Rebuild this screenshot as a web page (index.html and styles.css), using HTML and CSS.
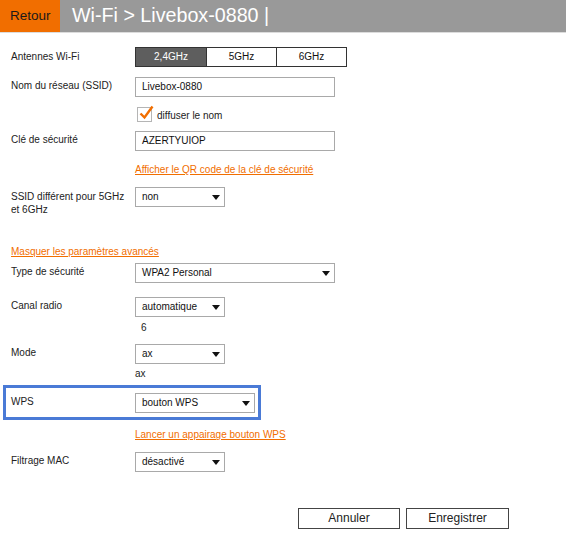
FILE: index.html
```
<!DOCTYPE html>
<html lang="fr">
<head>
<meta charset="utf-8">
<title>Wi-Fi</title>
<link rel="stylesheet" href="styles.css">
</head>
<body>
<header class="topbar">
  <a class="back">Retour</a>
  <h1 class="title">Wi-Fi &gt; Livebox-0880 |</h1>
</header>
<main class="form">
  <div class="row r-antennes">
    <span class="label lbl-tabs">Antennes Wi-Fi</span>
    <div class="tabs">
      <span class="tab active">2,4GHz</span>
      <span class="tab">5GHz</span>
      <span class="tab">6GHz</span>
    </div>
  </div>

  <div class="row r-ssid">
    <span class="label">Nom du réseau (SSID)</span>
    <div class="field wide">Livebox-0880</div>
  </div>

  <div class="sub r-check">
    <span class="checkbox">
      <svg class="check" viewBox="0 0 16 16" width="16" height="16"><path d="M2.5 8.5 L6.5 12.5 L14.5 1.5" fill="none" stroke="#f16e00" stroke-width="2.4"/></svg>
    </span>
    <span class="check-label">diffuser le nom</span>
  </div>

  <div class="row r-key">
    <span class="label">Clé de sécurité</span>
    <div class="field wide">AZERTYUIOP</div>
  </div>

  <div class="sub r-qr"><a class="link">Afficher le QR code de la clé de sécurité</a></div>

  <div class="row r-diff">
    <span class="label two">SSID différent pour 5GHz<br>et 6GHz</span>
    <div class="select short">non<span class="arrow"></span></div>
  </div>

  <div class="r-adv"><a class="link">Masquer les paramètres avancés</a></div>

  <div class="row r-type">
    <span class="label">Type de sécurité</span>
    <div class="select wide">WPA2 Personal<span class="arrow"></span></div>
  </div>

  <div class="row r-canal">
    <span class="label">Canal radio</span>
    <div class="select short">automatique<span class="arrow"></span></div>
  </div>
  <div class="sub value r-six">6</div>

  <div class="row r-mode">
    <span class="label">Mode</span>
    <div class="select short">ax<span class="arrow"></span></div>
  </div>
  <div class="sub value r-ax">ax</div>

  <div class="row r-wps">
    <span class="label">WPS</span>
    <div class="select mid">bouton WPS<span class="arrow"></span></div>
  </div>

  <div class="sub r-pair"><a class="link">Lancer un appairage bouton WPS</a></div>

  <div class="row r-mac">
    <span class="label">Filtrage MAC</span>
    <div class="select short">désactivé<span class="arrow"></span></div>
  </div>

  <div class="actions">
    <button class="btn btn-cancel">Annuler</button>
    <button class="btn btn-save">Enregistrer</button>
  </div>
</main>
</body>
</html>
```

FILE: styles.css
```
* { box-sizing: border-box; }
html, body { margin: 0; padding: 0; background: #fff; }
body {
  font-family: "Liberation Sans", Arial, sans-serif;
  font-size: 10px;
  color: #222;
  width: 566px;
}

.topbar {
  display: flex;
  align-items: stretch;
  height: 33px;
  background: #999999;
  border-bottom: 1px solid #dcdcdc;
}
.back {
  width: 60px;
  background: #f16e00;
  color: #1a1a1a;
  font-size: 13.5px;
  line-height: 32px;
  padding-left: 10px;
}
.title {
  margin: 0;
  padding-left: 12px;
  color: #fff;
  font-weight: normal;
  font-size: 19.7px;
  line-height: 31px;
}

.form { padding-left: 11px; }

.row {
  display: grid;
  grid-template-columns: 124px auto;
  align-items: start;
  justify-content: start;
}
.label {
  line-height: 14px;
  padding-top: 2px;
  color: #222;
}
.label.two { line-height: 13px; padding-top: 3px; }
.lbl-tabs { padding-top: 3px; }

.sub { padding-left: 124px; line-height: 14px; }

.tabs {
  display: flex;
  height: 20px;
  border: 1px solid #333;
}
.tab {
  width: 70px;
  text-align: center;
  line-height: 18px;
  color: #111;
  background: #fff;
  border-left: 1px solid #333;
}
.tab:first-child { border-left: none; }
.tab.active { background: #5e5e5e; color: #fff; }

.field, .select {
  height: 20px;
  border: 1px solid #a9a9a9;
  line-height: 18px;
  padding-left: 6px;
  color: #111;
  background: #fff;
}
.select { position: relative; }
.wide { width: 200px; }
.short { width: 90px; }
.mid { width: 120px; }
.arrow {
  position: absolute;
  right: 4px;
  top: 7px;
  width: 0;
  height: 0;
  border-left: 4px solid transparent;
  border-right: 4px solid transparent;
  border-top: 5px solid #111;
}

.r-antennes { margin-top: 14px; }
.r-ssid { margin-top: 10px; }
.r-check {
  margin-top: 10px;
  display: flex;
  align-items: center;
  height: 15px;
}
.checkbox {
  position: relative;
  width: 15px;
  height: 15px;
  margin-left: 2px;
  border: 1px solid #b5b5b5;
  background: #fff;
}
.check { position: absolute; left: 0; top: -3px; }
.check-label { margin-left: 5px; line-height: 14px; padding-top: 3px; }
.r-key { margin-top: 9px; }
.r-qr { margin-top: 12px; }
.link {
  color: #f16e00;
  text-decoration: underline;
  line-height: 14px;
}
.r-diff { margin-top: 10px; }
.r-adv { margin-top: 29px; line-height: 14px; }
.r-type { margin-top: 4px; }
.r-canal { margin-top: 14px; }
.value { color: #222; }
.r-six { margin-top: 4px; padding-left: 130px; }
.r-mode { margin-top: 9px; }
.r-ax { margin-top: 3px; }
.r-wps {
  margin-top: 4px;
  margin-left: -8px;
  width: 258px;
  height: 35px;
  border: 3px solid #4a7ad6;
  padding: 5px 0 0 5px;
}
.r-pair { margin-top: 8px; }
.r-mac { margin-top: 10px; }

.actions {
  display: flex;
  justify-content: flex-end;
  gap: 6px;
  margin-top: 36px;
  padding-right: 57px;
}
.btn {
  height: 21px;
  border: 1px solid #444;
  background: #fff;
  font-family: "Liberation Sans", Arial, sans-serif;
  font-size: 12px;
  color: #222;
  padding: 0;
  line-height: 19px;
}
.btn-cancel { width: 102px; }
.btn-save { width: 103px; }
```
